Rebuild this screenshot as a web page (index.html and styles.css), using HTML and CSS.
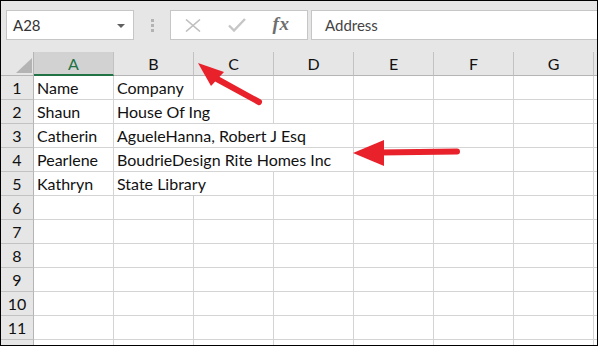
FILE: index.html
```html
<!DOCTYPE html>
<html>
<head>
<meta charset="utf-8">
<link rel="stylesheet" href="styles.css">
</head>
<body>
<div class="frame">
  <div class="toolbar">
    <div class="namebox"><span class="ref">A28</span><span class="caret"></span></div>
    <div class="grip"><i></i><i></i><i></i></div>
    <div class="fbtns">
      <span class="slot"><svg width="16" height="13" viewBox="0 0 16 13"><path d="M1 0.5 L15 12.5 M15 0.5 L1 12.5" stroke="#bfbfbf" stroke-width="1.6" fill="none"/></svg></span>
      <span class="slot"><svg width="18" height="14" viewBox="0 0 18 14"><path d="M1 7.5 L6 12.5 L17 1" stroke="#c6c6c6" stroke-width="2.4" fill="none"/></svg></span>
      <span class="slot fx">fx</span>
    </div>
    <div class="formula">Address</div>
  </div>
  <div class="sheet">
    <div class="corner"><svg width="16" height="15" viewBox="0 0 16 15"><path d="M16 0 L16 15 L0 15 Z" fill="#b4b4b4"/></svg></div>
    <div class="ch sel">A</div><div class="ch">B</div><div class="ch">C</div><div class="ch">D</div><div class="ch">E</div><div class="ch">F</div><div class="ch">G</div><div class="ch last"></div>

    <div class="rh">1</div><div class="c">Name</div><div class="c">Company</div><div class="c"></div><div class="c"></div><div class="c"></div><div class="c"></div><div class="c"></div><div class="c last"></div>
    <div class="rh">2</div><div class="c">Shaun</div><div class="c span2">House Of Ing</div><div class="c"></div><div class="c"></div><div class="c"></div><div class="c"></div><div class="c last"></div>
    <div class="rh">3</div><div class="c">Catherin</div><div class="c span3">AgueleHanna, Robert J Esq</div><div class="c"></div><div class="c"></div><div class="c"></div><div class="c last"></div>
    <div class="rh">4</div><div class="c">Pearlene</div><div class="c span3">BoudrieDesign Rite Homes Inc</div><div class="c"></div><div class="c"></div><div class="c"></div><div class="c last"></div>
    <div class="rh">5</div><div class="c">Kathryn</div><div class="c span2">State Library</div><div class="c"></div><div class="c"></div><div class="c"></div><div class="c"></div><div class="c last"></div>
    <div class="rh">6</div><div class="c"></div><div class="c"></div><div class="c"></div><div class="c"></div><div class="c"></div><div class="c"></div><div class="c"></div><div class="c last"></div>
    <div class="rh">7</div><div class="c"></div><div class="c"></div><div class="c"></div><div class="c"></div><div class="c"></div><div class="c"></div><div class="c"></div><div class="c last"></div>
    <div class="rh">8</div><div class="c"></div><div class="c"></div><div class="c"></div><div class="c"></div><div class="c"></div><div class="c"></div><div class="c"></div><div class="c last"></div>
    <div class="rh">9</div><div class="c"></div><div class="c"></div><div class="c"></div><div class="c"></div><div class="c"></div><div class="c"></div><div class="c"></div><div class="c last"></div>
    <div class="rh">10</div><div class="c"></div><div class="c"></div><div class="c"></div><div class="c"></div><div class="c"></div><div class="c"></div><div class="c"></div><div class="c last"></div>
    <div class="rh">11</div><div class="c"></div><div class="c"></div><div class="c"></div><div class="c"></div><div class="c"></div><div class="c"></div><div class="c"></div><div class="c last"></div>
    <div class="rh"></div><div class="c"></div><div class="c"></div><div class="c"></div><div class="c"></div><div class="c"></div><div class="c"></div><div class="c"></div><div class="c last"></div>
  </div>
  <svg class="arrows" width="598" height="346" viewBox="0 0 598 346">
    <line x1="217" y1="79" x2="259" y2="102" stroke="#e8212b" stroke-width="6" stroke-linecap="round"/>
    <polygon points="198,63 224,72 211,86" fill="#e8212b"/>
    <line x1="380" y1="152.5" x2="457" y2="151.5" stroke="#e8212b" stroke-width="6" stroke-linecap="round"/>
    <polygon points="353,153 384,140 384,166" fill="#e8212b"/>
  </svg>
</div>
</body>
</html>
```

FILE: styles.css
```css
* { box-sizing: border-box; }
html, body { margin: 0; padding: 0; background: #fff; }
body { font-family: Lato, "Liberation Sans", sans-serif; }

.frame {
  position: relative;
  width: 598px;
  height: 346px;
  border: 1px solid #000;
  overflow: hidden;
  background: #fff;
}

.toolbar {
  height: 51px;
  background: #e6e6e6;
  display: flex;
  align-items: flex-start;
  padding: 9px 0 0 5px;
}

.namebox {
  width: 128px;
  height: 30px;
  background: #fff;
  border: 1px solid #c6c6c6;
  display: flex;
  align-items: center;
  justify-content: space-between;
  padding: 0 8px 0 6px;
  font-size: 15px;
  color: #333;
}
.caret {
  width: 0; height: 0;
  border-left: 4px solid transparent;
  border-right: 4px solid transparent;
  border-top: 4px solid #606060;
  margin-top: 1px;
}

.grip {
  width: 36px;
  height: 30px;
  display: flex;
  flex-direction: column;
  align-items: center;
  justify-content: center;
  gap: 2px;
}
.grip i {
  display: block;
  width: 3px;
  height: 3px;
  background: #b3b3b3;
}

.fbtns {
  width: 138px;
  height: 30px;
  background: #fff;
  border: 1px solid #c6c6c6;
  display: flex;
  align-items: center;
}
.slot {
  width: 44px;
  height: 28px;
  display: flex;
  align-items: center;
  justify-content: center;
}
.fx {
  font-family: "Liberation Serif", serif;
  font-style: italic;
  font-weight: bold;
  font-size: 19px;
  color: #6e6e6e;
  padding-bottom: 2px;
  letter-spacing: 0.5px;
}

.formula {
  flex: 1;
  height: 30px;
  margin-left: 3px;
  background: #fff;
  border: 1px solid #c6c6c6;
  border-right: none;
  display: flex;
  align-items: center;
  padding-left: 13px;
  font-size: 15px;
  color: #444;
}

.sheet {
  display: grid;
  grid-template-columns: 33px repeat(7, 80px) 1fr;
  grid-auto-rows: 24px;
  font-size: 16px;
  color: #111;
}

.corner {
  background: #e6e6e6;
  border-right: 1px solid #b5b5b5;
  border-bottom: 1px solid #b5b5b5;
  display: flex;
  align-items: flex-end;
  justify-content: flex-end;
  padding: 0 1px 2px 0;
}

.ch {
  background: #e6e6e6;
  border-right: 1px solid #c2c2c2;
  border-bottom: 1px solid #b5b5b5;
  display: flex;
  align-items: center;
  justify-content: center;
  color: #111;
}
.ch.sel {
  background: #d2d2d2;
  color: #217346;
  border-bottom: 2px solid #217346;
}
.ch.last { border-right: none; }

.rh {
  background: #e6e6e6;
  border-right: 1px solid #b5b5b5;
  border-bottom: 1px solid #c2c2c2;
  display: flex;
  align-items: center;
  justify-content: center;
  color: #111;
}

.c {
  border-right: 1px solid #d4d4d4;
  border-bottom: 1px solid #d4d4d4;
  display: flex;
  align-items: center;
  padding-left: 3px;
  white-space: nowrap;
}
.c.last { border-right: none; }
.span2 { grid-column: span 2; }
.span3 { grid-column: span 3; }

.arrows {
  position: absolute;
  left: -1px;
  top: -1px;
  pointer-events: none;
}
```
